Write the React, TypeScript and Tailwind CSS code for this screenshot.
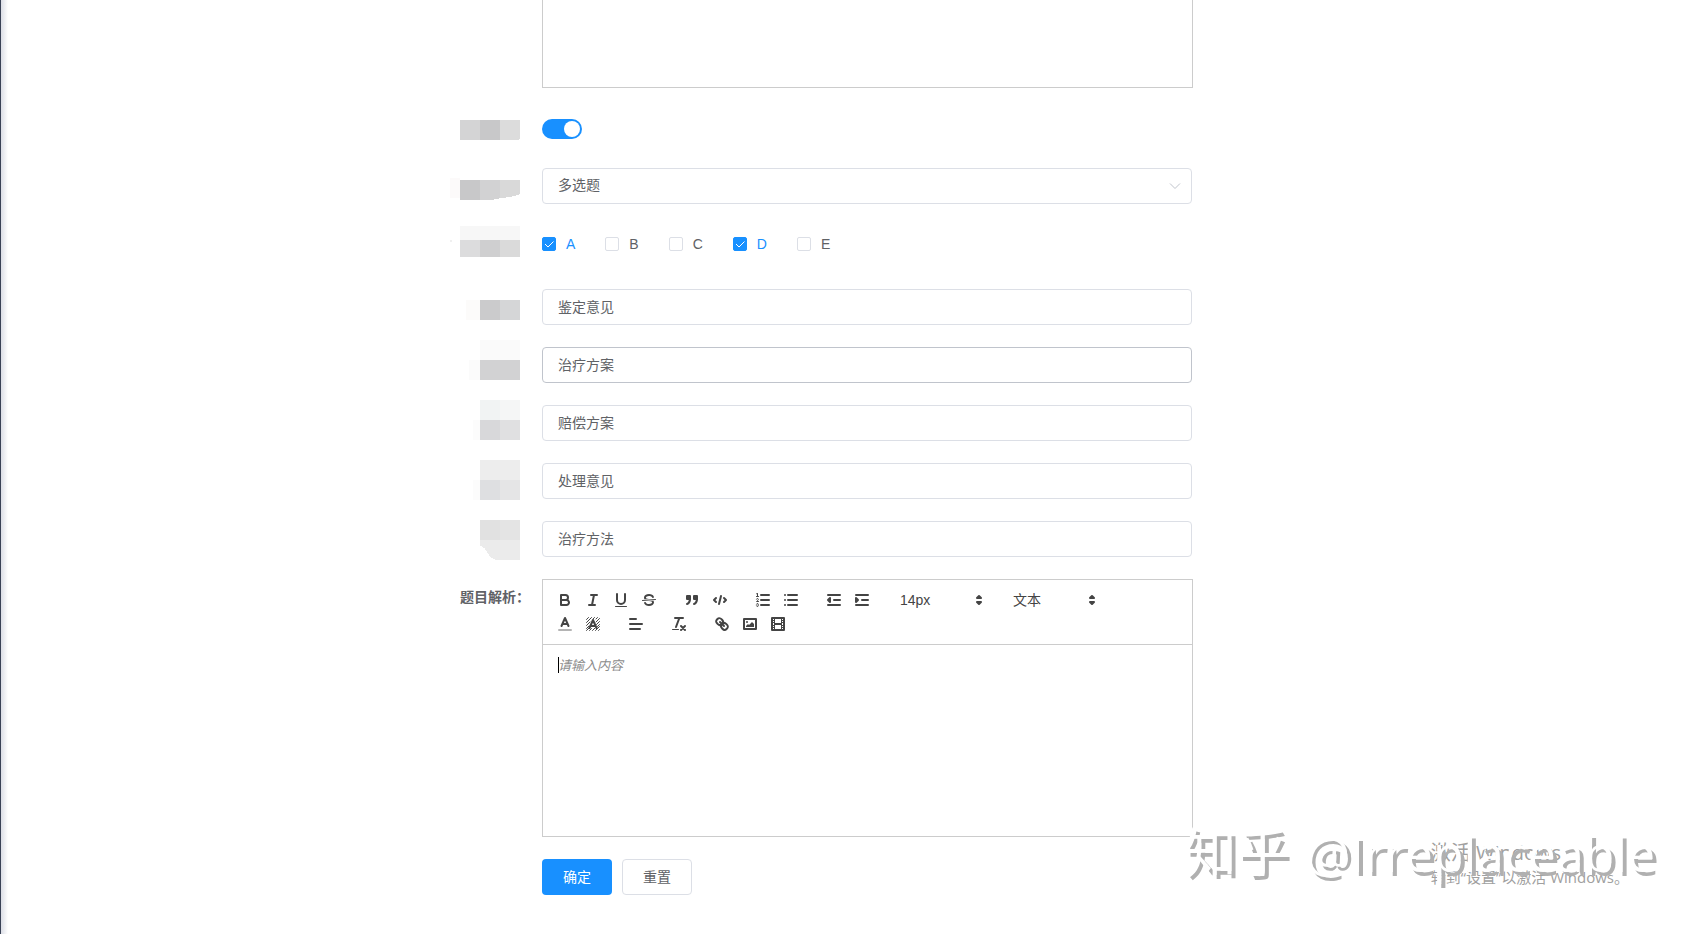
import { useState } from "react";
import type { ReactNode } from "react";

interface Tile {
  x: number;
  y: number;
  w?: number;
  h?: number;
  fill: string;
}

// masked label blocks, coordinates inside the 100x36 label cell
const masks: Record<string, Tile[]> = {
  enabled: [
    { x: 18, y: 10, fill: "#d4d4d5" },
    { x: 38, y: 10, fill: "#c8c8c9" },
    { x: 58, y: 10, fill: "#dcdcdc" },
  ],
  type: [
    { x: 8, y: 10, w: 10, fill: "#fcfafa" },
    { x: 18, y: 12, fill: "#c8c8c9" },
    { x: 38, y: 12, fill: "#d2d2d3" },
    { x: 58, y: 12, fill: "#d9d9d9" },
  ],
  answer: [
    { x: 18, y: 0, w: 60, h: 14, fill: "#f7f7f7" },
    { x: 18, y: 14, h: 17, fill: "#dcdcdd" },
    { x: 38, y: 14, h: 17, fill: "#cfcfd0" },
    { x: 58, y: 14, h: 17, fill: "#dadada" },
    { x: 8, y: 14, w: 2, h: 2, fill: "#f0f0f0" },
  ],
  optionA: [
    { x: 24, y: 11, w: 14, fill: "#fcfbfa" },
    { x: 38, y: 11, fill: "#cbcbcc" },
    { x: 58, y: 11, fill: "#d5d6d7" },
  ],
  optionB: [
    { x: 38, y: -7, w: 40, fill: "#fafafa" },
    { x: 27, y: 13, w: 11, fill: "#fbfbfb" },
    { x: 38, y: 13, w: 40, fill: "#d2d2d3" },
  ],
  optionC: [
    { x: 38, y: -5, fill: "#f1f3f3" },
    { x: 58, y: -5, fill: "#f5f6f6" },
    { x: 31, y: 15, w: 7, fill: "#fcfcfc" },
    { x: 38, y: 15, fill: "#d8d8da" },
    { x: 58, y: 15, fill: "#e0e0e1" },
  ],
  optionD: [
    { x: 38, y: -3, w: 40, fill: "#ededed" },
    { x: 31, y: 17, w: 7, fill: "#fcfcfc" },
    { x: 38, y: 17, fill: "#dedfe1" },
    { x: 58, y: 17, fill: "#e5e5e6" },
  ],
  optionE: [
    { x: 38, y: -1, fill: "#e1e1e1" },
    { x: 58, y: -1, fill: "#e4e4e4" },
    { x: 38, y: 19, w: 40, fill: "#ebebeb" },
  ],
};

const maskCuts: Record<string, string> = {
  enabled: "M79 28v3H75Z",
  type: "M79 26C70 30 60 29 50 32H79Z",
  optionE: "M37 25q5 0 8 6q3 6 9 8H37Z",
};

function MaskedLabel({ name, htmlFor }: { name: string; htmlFor: string }) {
  return (
    <label htmlFor={htmlFor} aria-label={name} className="w-[100px] shrink-0">
      <svg viewBox="0 0 100 36" className="h-9 w-full overflow-visible" shapeRendering="crispEdges">
        {masks[name].map((t, i) => (
          <rect key={i} x={t.x} y={t.y} width={t.w ?? 20} height={t.h ?? 20} fill={t.fill} />
        ))}
        {maskCuts[name] && <path d={maskCuts[name]} fill="#fff" />}
      </svg>
    </label>
  );
}

function Row({ name, htmlFor, children }: { name: string; htmlFor: string; children: ReactNode }) {
  return (
    <div className="flex">
      <MaskedLabel name={name} htmlFor={htmlFor} />
      <div className="min-w-0 flex-1">{children}</div>
    </div>
  );
}

const icons: Record<string, ReactNode> = {
  bold: (
    <>
      <path d="M5,4H9.5A2.5,2.5,0,0,1,12,6.5v0A2.5,2.5,0,0,1,9.5,9H5V4Z" />
      <path d="M5,9h5.5A2.5,2.5,0,0,1,13,11.5v0A2.5,2.5,0,0,1,10.5,14H5V9Z" />
    </>
  ),
  italic: <path d="M7,4H13M5,14H11M8,14L10,4" />,
  underline: (
    <>
      <path d="M5,3V9a4.012,4.012,0,0,0,4,4H9a4.012,4.012,0,0,0,4-4V3" />
      <rect x="3" y="15" width="12" height="1" rx="0.5" fill="#444" stroke="none" />
    </>
  ),
  strike: (
    <>
      <path d="M15.5,8.5L2.5,9.5" strokeWidth="1" />
      <g fill="#444" stroke="none">
        <path d="M9.007,8C6.542,7.791,6,7.519,6,6.5,6,5.792,7.283,5,9,5c1.571,0,2.765.679,2.969,1.309a1,1,0,0,0,1.9-.617C13.356,4.106,11.354,3,9,3,6.2,3,4,4.538,4,6.5a3.2,3.2,0,0,0,.5,1.843Z" />
        <path d="M8.984,10C11.457,10.208,12,10.479,12,11.5c0,0.708-1.283,1.5-3,1.5-1.571,0-2.765-.679-2.969-1.309a1,1,0,1,0-1.9.617C4.644,13.894,6.646,15,9,15c2.8,0,5-1.538,5-3.5a3.2,3.2,0,0,0-.5-1.843Z" />
      </g>
    </>
  ),
  blockquote: (
    <g fill="#444">
      <rect x="4" y="5" width="3" height="3" />
      <rect x="11" y="5" width="3" height="3" />
      <path d="M7,8c0,4.031-3,5-3,5" />
      <path d="M14,8c0,4.031-3,5-3,5" />
    </g>
  ),
  code: <path d="M5,7L3,9L5,11M13,7L15,9L13,11M10,5L8,13" />,
  ordered: (
    <>
      <path d="M7,4H15M7,9H15M7,14H15" />
      <path d="M2.5,5.5H4.5" strokeWidth="1" />
      <path
        d="M3.5,6A0.5,0.5,0,0,1,3,5.5V3.085l-0.276.138A0.5,0.5,0,0,1,2.053,3c-0.124-.247-0.023-0.324.224-0.447l1-.5A0.5,0.5,0,0,1,4,2.5v3A0.5,0.5,0,0,1,3.5,6Z"
        fill="#444"
        stroke="none"
      />
      <path d="M4.5,10.5h-2c0-.234,1.85-1.076,1.85-2.234A0.959,0.959,0,0,0,2.5,8.156" strokeWidth="1" />
      <path
        d="M2.5,14.846a0.959,0.959,0,0,0,1.85-.109A0.7,0.7,0,0,0,3.75,14a0.688,0.688,0,0,0,.6-0.736,0.959,0.959,0,0,0-1.85-.109"
        strokeWidth="1"
      />
    </>
  ),
  bullet: <path d="M6,4H15M6,9H15M6,14H15M3,4H3M3,9H3M3,14H3" />,
  outdent: (
    <>
      <path d="M3,14H15M3,4H15M9,9H15" />
      <path d="M5,7V11L3,9Z" fill="#444" />
    </>
  ),
  indent: (
    <>
      <path d="M3,14H15M3,4H15M9,9H15" />
      <path d="M3,7V11L5,9Z" fill="#444" />
    </>
  ),
  color: (
    <>
      <path d="M3,15H15" opacity="0.4" />
      <path d="M5.5,11L9,3L12.5,11M11.63,9H6.38" />
    </>
  ),
  background: (
    <>
      <path
        d="M2.5,4.5L4.5,2.5M2.5,7.5L7.5,2.5M2.5,10.5L6,7M9,4L10.5,2.5M2.5,13.5L5,11M12,4L13.5,2.5M2.5,15.5L5,13M12,7L15.5,3.5M5.5,15.5L7.5,13.5M12.5,9.5L15.5,6.5M8.5,15.5L11,13M13.5,11.5L15.5,9.5M11.5,15.5L15.5,11.5M14.5,15.5L15.5,14.5"
        strokeWidth="1"
      />
      <path d="M5.5,13L9,5L12.5,13M11.63,11H6.38" />
    </>
  ),
  align: <path d="M15,9H3M13,14H3M9,4H3" />,
  clean: (
    <>
      <path d="M5,3H13M6,12L9.35,3M11,11L15,15M15,11L11,15" />
      <rect x="2" y="14" width="7" height="1" rx="0.5" fill="#444" stroke="none" />
    </>
  ),
  link: (
    <>
      <path d="M7,7L11,11" />
      <path d="M8.9,4.577a3.476,3.476,0,0,1,.36,4.679A3.476,3.476,0,0,1,4.577,8.9C3.185,7.5,2.035,6.4,4.217,4.217S7.5,3.185,8.9,4.577Z" />
      <path d="M13.423,9.1a3.476,3.476,0,0,0-4.679-.36,3.476,3.476,0,0,0,.36,4.679c1.392,1.392,2.5,2.542,4.679.36S14.815,10.5,13.423,9.1Z" />
    </>
  ),
  image: (
    <>
      <rect x="3" y="4" width="12" height="10" />
      <circle cx="6" cy="7" r="1" fill="#444" stroke="none" />
      <path d="M5,12V11L7,9L8,10L11,7L13,9V12Z" fill="#444" stroke="none" />
    </>
  ),
  video: (
    <>
      <rect x="3" y="3" width="12" height="12" />
      <path
        d="M5,3h1v12H5ZM12,3h1v12h-1ZM5,8h8v2H5ZM3,5h3v1H3ZM3,7h3v1H3ZM3,10h3v1H3ZM3,12h3v1H3ZM12,5h3v1h-3ZM12,7h3v1h-3ZM12,10h3v1h-3ZM12,12h3v1h-3Z"
        fill="#444"
        stroke="none"
      />
    </>
  ),
};

function ToolGroup({ names }: { names: string[] }) {
  return (
    <div className="mr-[15px] flex">
      {names.map((name) => (
        <button key={name} type="button" aria-label={name} className="h-6 w-7 px-[5px] py-[3px]">
          <svg
            viewBox="0 0 18 18"
            className="size-[18px]"
            fill="none"
            stroke="#444"
            strokeWidth="2"
            strokeLinecap="round"
            strokeLinejoin="round"
          >
            {icons[name]}
          </svg>
        </button>
      ))}
    </div>
  );
}

function Picker({ label, options }: { label: string; options: string[] }) {
  return (
    <div className="relative mr-[15px] h-6 w-[98px]">
      <select aria-label={label} className="h-6 w-full appearance-none pl-[9px] text-sm leading-6 text-[#444] outline-none">
        {options.map((o) => (
          <option key={o}>{o}</option>
        ))}
      </select>
      <svg
        viewBox="0 0 18 18"
        className="pointer-events-none absolute top-[3px] right-px size-[18px]"
        fill="#444"
        stroke="#444"
        strokeWidth="2"
        strokeLinecap="round"
        strokeLinejoin="round"
      >
        <path d="M7,11L9,13L11,11ZM7,7L9,5L11,7Z" />
      </svg>
    </div>
  );
}

const optionFields = [
  { name: "optionA", value: "鉴定意见", border: "border-[#dcdfe6]" },
  { name: "optionB", value: "治疗方案", border: "border-[#c0c4cc]" },
  { name: "optionC", value: "赔偿方案", border: "border-[#dcdfe6]" },
  { name: "optionD", value: "处理意见", border: "border-[#dcdfe6]" },
  { name: "optionE", value: "治疗方法", border: "border-[#dcdfe6]" },
];

export default function App() {
  const [enabled, setEnabled] = useState(true);
  const [answers, setAnswers] = useState<string[]>(["A", "D"]);

  const toggleAnswer = (key: string) => {
    setAnswers((prev) => (prev.includes(key) ? prev.filter((k) => k !== key) : [...prev, key]));
  };

  return (
    <div className="relative min-h-screen overflow-hidden bg-white font-['Liberation_Sans','Noto_Sans_CJK_SC',sans-serif] text-sm text-[#606266]">
      <div className="absolute inset-y-0 left-0 w-2 border-l border-[#3a4256] bg-gradient-to-r from-[#dcdee6] to-white" />

      <form className="ml-[26%] flex w-[750px] flex-col gap-[22px]" onSubmit={(e) => e.preventDefault()}>
        {/* 题干 */}
        <div className="-mr-px ml-[100px] h-[88px] border border-t-0 border-[#ccc]" />

        <Row name="enabled" htmlFor="enabled">
          <div className="pt-[9px]">
            <input
              id="enabled"
              type="checkbox"
              role="switch"
              checked={enabled}
              onChange={() => setEnabled(!enabled)}
              className="block h-5 w-10 appearance-none rounded-full bg-[#dcdfe6] before:m-[2px] before:block before:size-4 before:rounded-full before:bg-white checked:bg-[#1890ff] checked:before:ml-[22px]"
            />
          </div>
        </Row>

        <Row name="type" htmlFor="type">
          <div className="relative">
            <select
              id="type"
              className="block h-9 w-full appearance-none rounded border border-[#dcdfe6] bg-white px-[15px] pb-[2px] text-sm outline-none"
            >
              <option>多选题</option>
              <option>单选题</option>
            </select>
            <svg
              viewBox="0 0 14 14"
              className="pointer-events-none absolute top-[11px] right-[10px] size-[14px]"
              fill="none"
              stroke="#c0c4cc"
            >
              <path d="M2 4.5L7 9.5L12 4.5" />
            </svg>
          </div>
        </Row>

        <Row name="answer" htmlFor="answer-A">
          <div className="flex h-[41px] gap-[30px] pt-[6px]">
            {["A", "B", "C", "D", "E"].map((key) => {
              const checked = answers.includes(key);
              return (
                <label key={key} className={`flex h-6 items-center gap-[10px] ${checked ? "text-[#1890ff]" : ""}`}>
                  <span className="relative block size-[14px]">
                    <input
                      id={`answer-${key}`}
                      type="checkbox"
                      checked={checked}
                      onChange={() => toggleAnswer(key)}
                      className="block size-[14px] appearance-none rounded-[2px] border border-[#dcdfe6] bg-white checked:border-[#1890ff] checked:bg-[#1890ff]"
                    />
                    {checked && (
                      <svg viewBox="0 0 14 14" className="pointer-events-none absolute inset-0" fill="none" stroke="#fff">
                        <path d="M3 7L6 10L11.5 4.5" />
                      </svg>
                    )}
                  </span>
                  {key}
                </label>
              );
            })}
          </div>
        </Row>

        {optionFields.map((f) => (
          <Row key={f.name} name={f.name} htmlFor={f.name}>
            <input
              id={f.name}
              type="text"
              defaultValue={f.value}
              className={`block h-9 w-full rounded border bg-white px-[15px] pb-[2px] text-sm outline-none ${f.border}`}
            />
          </Row>
        ))}

        {/* 解析 */}
        <div className="flex">
          <label htmlFor="analysis" className="w-[100px] shrink-0 pl-[18px] leading-9 font-bold whitespace-nowrap">
            题目解析：
          </label>
          <div className="-mr-px min-w-0 flex-1 border border-[#ccc]">
            <div className="flex flex-wrap border-b border-[#ccc] p-2">
              <ToolGroup names={["bold", "italic", "underline", "strike"]} />
              <ToolGroup names={["blockquote", "code"]} />
              <ToolGroup names={["ordered", "bullet"]} />
              <ToolGroup names={["outdent", "indent"]} />
              <Picker label="字号" options={["14px", "16px", "18px"]} />
              <Picker label="标题" options={["文本", "标题1", "标题2"]} />
              <ToolGroup names={["color", "background"]} />
              <ToolGroup names={["align"]} />
              <ToolGroup names={["clean"]} />
              <ToolGroup names={["link", "image", "video"]} />
            </div>
            <div className="relative">
              <textarea
                id="analysis"
                placeholder="请输入内容"
                className="block h-[191px] w-full resize-none px-[15px] py-[11px] text-[13px] leading-5 outline-none placeholder:text-[#8c8c8c] placeholder:italic"
              />
              <span className="absolute top-3 left-[15px] h-4 w-px bg-black" />
            </div>
          </div>
        </div>

        <div className="ml-[100px] flex gap-[10px]">
          <button type="submit" className="h-9 w-[70px] rounded bg-[#1890ff] text-sm text-white">
            确定
          </button>
          <button type="reset" className="h-9 w-[70px] rounded border border-[#dcdfe6] bg-white text-sm">
            重置
          </button>
        </div>
      </form>

      <div className="pointer-events-none absolute right-[71px] bottom-[47px] font-['Open_Sans','Noto_Sans_CJK_SC',sans-serif] text-[#a0a0a0]">
        <p className="text-xl leading-7">激活 Windows</p>
        <p className="text-[15px] leading-5 whitespace-nowrap">转到“设置”以激活 Windows。</p>
      </div>
      <p className="pointer-events-none absolute right-[45px] bottom-[45px] font-['Open_Sans','Noto_Sans_CJK_SC',sans-serif] text-[50px] leading-[72px] whitespace-nowrap text-white [text-shadow:4px_4px_0_#b0b0b0]">
        <span className="mr-1 text-[52px]">知乎</span> @Irreplaceable
      </p>
    </div>
  );
}
